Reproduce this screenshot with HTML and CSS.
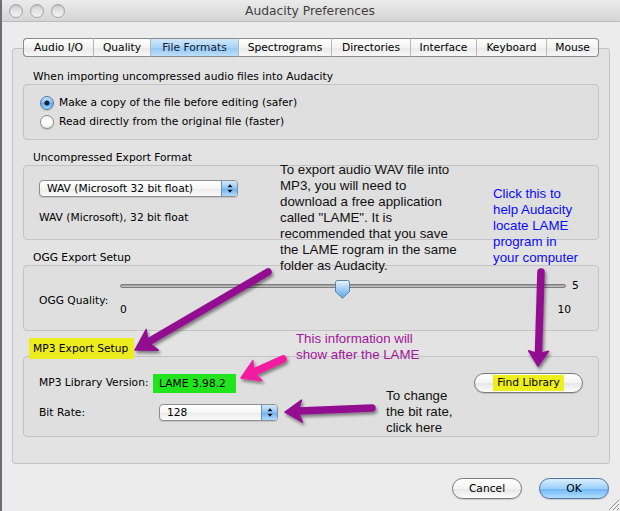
FILE: index.html
```html
<!DOCTYPE html>
<html>
<head>
<meta charset="utf-8">
<title>Audacity Preferences</title>
<link rel="stylesheet" href="styles.css">
</head>
<body>
<div class="window">
  <div class="titlebar">
    <div class="lights"><span class="light"></span><span class="light"></span><span class="light"></span></div>
    <div class="title">Audacity Preferences</div>
    <div class="lights-spacer"></div>
  </div>
  <div class="body">
    <div class="tabs">
      <div class="tab">Audio I/O</div>
      <div class="tab">Quality</div>
      <div class="tab selected">File Formats</div>
      <div class="tab">Spectrograms</div>
      <div class="tab">Directories</div>
      <div class="tab">Interface</div>
      <div class="tab">Keyboard</div>
      <div class="tab">Mouse</div>
    </div>
    <div class="panel">
      <section class="section">
        <div class="heading">When importing uncompressed audio files into Audacity</div>
        <div class="group group-import">
          <div class="radio-row"><span class="radio on"></span><span>Make a copy of the file before editing (safer)</span></div>
          <div class="radio-row"><span class="radio"></span><span>Read directly from the original file (faster)</span></div>
        </div>
      </section>
      <section class="section">
        <div class="heading">Uncompressed Export Format</div>
        <div class="group group-format">
          <div class="select select-format">
            <span class="select-text">WAV (Microsoft 32 bit float)</span>
            <span class="stepper"><svg width="8" height="11" viewBox="0 0 8 11"><path d="M1.5 4.2 L4 1.2 L6.5 4.2 Z M1.5 6.8 L4 9.8 L6.5 6.8 Z" fill="#111"/></svg></span>
          </div>
          <div class="format-desc">WAV (Microsoft), 32 bit float</div>
        </div>
      </section>
      <section class="section">
        <div class="heading">OGG Export Setup</div>
        <div class="group group-ogg">
          <div class="ogg-label">OGG Quality:</div>
          <div class="ogg-slider">
            <div class="slider-row">
              <div class="track">
                <svg class="thumb" width="15" height="19" viewBox="0 0 15 19"><defs><linearGradient id="tg" x1="0" y1="0" x2="0" y2="1"><stop offset="0" stop-color="#eef6fe"/><stop offset="0.45" stop-color="#a5d0f6"/><stop offset="1" stop-color="#5fa5ea"/></linearGradient></defs><path d="M2.5 .5 H12.5 Q14.5 .5 14.5 2.5 V11.5 L7.5 18.3 L.5 11.5 V2.5 Q.5 .5 2.5 .5 Z" fill="url(#tg)" stroke="#5b7ea8"/></svg>
              </div>
              <span class="max">5</span>
            </div>
            <div class="scale"><span>0</span><span>10</span></div>
          </div>
        </div>
      </section>
      <section class="section">
        <div class="heading"><span class="hl-yellow">MP3 Export Setup</span></div>
        <div class="group group-mp3">
          <div class="mp3-row">
            <span class="mp3-label">MP3 Library Version:</span>
            <span class="lame-version">LAME 3.98.2</span>
            <span class="btn btn-find"><span class="hl-yellow-btn">Find Library</span></span>
          </div>
          <div class="mp3-row">
            <span class="mp3-label">Bit Rate:</span>
            <div class="select select-rate">
              <span class="select-text">128</span>
              <span class="stepper"><svg width="8" height="11" viewBox="0 0 8 11"><path d="M1.5 4.2 L4 1.2 L6.5 4.2 Z M1.5 6.8 L4 9.8 L6.5 6.8 Z" fill="#111"/></svg></span>
            </div>
          </div>
        </div>
      </section>
    </div>
    <div class="buttons">
      <span class="btn btn-cancel">Cancel</span>
      <span class="btn btn-ok">OK</span>
    </div>
  </div>

  <div class="note note-lame">To export audio WAV file into<br>MP3, you will need to<br>download a free application<br>called "LAME". It is<br>recommended that you save<br>the LAME rogram in the same<br>folder as Audacity.</div>
  <div class="note note-find">Click this to<br>help Audacity<br>locate LAME<br>program in<br>your computer</div>
  <div class="note note-info">This information will<br>show after the LAME</div>
  <div class="note note-bitrate">To change<br>the bit rate,<br>click here</div>

  <svg class="overlay" width="620" height="511" viewBox="0 0 620 511">
    <defs>
      <filter id="sh" x="-30%" y="-30%" width="160%" height="160%">
        <feDropShadow dx="1.5" dy="2.5" stdDeviation="1.6" flood-color="#000" flood-opacity="0.45"/>
      </filter>
    </defs>
    <g filter="url(#sh)" fill="#930d91" stroke="#930d91" stroke-linecap="round" stroke-linejoin="round">
      <line x1="268" y1="272" x2="150" y2="341" stroke-width="7.5"/>
      <polygon points="135,350 158.3,350.2 148,342.4 146.2,329.5" stroke-width="1.5"/>
    </g>
    <g filter="url(#sh)" fill="#930d91" stroke="#930d91" stroke-linecap="round" stroke-linejoin="round">
      <line x1="541" y1="272" x2="538.5" y2="352" stroke-width="7.5"/>
      <polygon points="538,366 548.5,351.3 538.4,354 528.5,350.7" stroke-width="1.5"/>
    </g>
    <g filter="url(#sh)" fill="#f11c9f" stroke="#f11c9f" stroke-linecap="round" stroke-linejoin="round">
      <line x1="283" y1="359" x2="254" y2="372" stroke-width="7.5"/>
      <polygon points="241,378 261.9,380.6 253.3,372.4 252.9,360.6" stroke-width="1.5"/>
    </g>
    <g filter="url(#sh)" fill="#930d91" stroke="#930d91" stroke-linecap="round" stroke-linejoin="round">
      <line x1="372" y1="408" x2="299" y2="411" stroke-width="7.5"/>
      <polygon points="285,412 302.5,422.2 297.7,411.4 301.5,400.2" stroke-width="1.5"/>
    </g>
  </svg>

  <svg class="grip" width="14" height="14" viewBox="0 0 14 14">
    <path d="M13 3 L3 13 M13 7 L7 13 M13 11 L11 13" stroke="#8a8a8a" stroke-width="1"/>
    <path d="M13.8 3.8 L3.8 13.8 M13.8 7.8 L7.8 13.8" stroke="#fff" stroke-width="1"/>
  </svg>
</div>
</body>
</html>
```

FILE: styles.css
```css
* { box-sizing: border-box; }
html, body { margin: 0; padding: 0; }
body {
  width: 620px;
  height: 511px;
  overflow: hidden;
  background: #ececec;
  font-family: "DejaVu Sans", "Lucida Grande", sans-serif;
  font-size: 10.7px;
  color: #000;
}
.window {
  position: relative;
  width: 620px;
  height: 511px;
  background: #ececec;
  overflow: hidden;
}
.window::after {
  content: "";
  position: absolute;
  left: 0;
  top: 0;
  bottom: 0;
  width: 2px;
  background: #6e6b7d;
}

/* title bar */
.titlebar {
  height: 22px;
  display: flex;
  align-items: center;
  background: linear-gradient(#ebebeb, #d5d5d5);
  border-bottom: 1px solid #bcbcbc;
}
.lights {
  width: 70px;
  display: flex;
  gap: 7px;
  padding-left: 9px;
}
.lights-spacer { width: 70px; }
.light {
  width: 14px;
  height: 14px;
  border-radius: 50%;
  border: 1px solid #a5a5a5;
  background: linear-gradient(#d2d2d2, #f4f4f4);
  box-shadow: inset 0 1px 1px rgba(0,0,0,0.12);
}
.title {
  flex: 1;
  text-align: center;
  font-size: 12.3px;
  color: #3f3f3f;
}

/* body */
.body {
  padding: 16px 10px 0 12px;
}
.tabs {
  position: relative;
  z-index: 1;
  display: flex;
  justify-content: center;
  height: 19px;
  margin-bottom: -9px;
}
.tab {
  height: 19px;
  display: flex;
  align-items: center;
  justify-content: center;
  border-top: 1px solid #8a8a8a;
  border-bottom: 1px solid #8a8a8a;
  border-right: 1px solid #b8b8b8;
  background: linear-gradient(#ffffff, #f3f3f3 50%, #e9e9e9 51%, #f7f7f7);
  white-space: nowrap;
}
.tab:first-child {
  border-left: 1px solid #8a8a8a;
  border-radius: 4px 0 0 4px;
}
.tab:last-child {
  border-right: 1px solid #8a8a8a;
  border-radius: 0 4px 4px 0;
}
.tab:nth-child(1) { width: 71px; }
.tab:nth-child(2) { width: 57px; }
.tab:nth-child(3) { width: 88px; }
.tab:nth-child(4) { width: 93px; }
.tab:nth-child(5) { width: 79px; }
.tab:nth-child(6) { width: 66px; }
.tab:nth-child(7) { width: 70px; }
.tab:nth-child(8) { width: 52px; }
.tab.selected {
  background: linear-gradient(#d2e9fd, #a9d3f7 50%, #94c7f4 51%, #bddffb);
  color: #0d1a33;
}

.panel {
  background: #e3e3e3;
  border: 1px solid #c3c3c3;
  border-radius: 3px;
  padding: 21px 10px 26px 10px;
}
.section + .section { margin-top: 11px; }
.heading {
  line-height: 14px;
  padding-left: 10px;
  white-space: nowrap;
}
.group {
  border: 1px solid #c4c4c4;
  border-radius: 4px;
  background: #dfdfdf;
}

/* import group */
.group-import {
  padding: 8px 15px 8px 16px;
}
.radio-row {
  display: flex;
  align-items: center;
  gap: 5px;
  height: 19px;
}
.radio {
  width: 14px;
  height: 14px;
  flex: none;
  border-radius: 50%;
  border: 1px solid #8b8b8b;
  background: linear-gradient(#f4f4f4, #ffffff 60%, #eaeaea);
  box-shadow: 0 1px 1px rgba(0,0,0,0.15);
}
.radio.on {
  border-color: #52769f;
  background:
    radial-gradient(circle at 50% 50%, #1d2333 0, #1d2333 2.2px, transparent 2.8px),
    linear-gradient(#c4e1fc, #7ab9f4 50%, #5aa5ee 51%, #a6d5fb);
}

/* selects */
.select {
  display: flex;
  align-items: stretch;
  height: 17px;
  border: 1px solid #8d8d8d;
  border-radius: 4px;
  background: linear-gradient(#ffffff, #f6f6f6 50%, #ebebeb 51%, #fafafa);
  overflow: hidden;
  box-shadow: 0 1px 1px rgba(0,0,0,0.12);
}
.select-text {
  flex: 1;
  padding-left: 7px;
  line-height: 15px;
  white-space: nowrap;
}
.stepper {
  width: 16px;
  flex: none;
  display: flex;
  align-items: center;
  justify-content: center;
  border-left: 1px solid #6a8db6;
  background: linear-gradient(#d3e9fd, #8cc3f6 50%, #6aaef1 51%, #b3dcfc);
}

.group-format {
  padding: 14px 15px 14px 15px;
}
.select-format { width: 199px; }
.format-desc {
  margin-top: 14px;
  line-height: 14px;
}

/* ogg group */
.group-ogg {
  display: flex;
  padding: 14px 15px 13px 15px;
}
.ogg-label {
  width: 81px;
  align-self: center;
  line-height: 14px;
  padding-top: 4px;
}
.ogg-slider {
  display: flex;
  flex-direction: column;
  gap: 5px;
}
.slider-row {
  display: flex;
  align-items: flex-start;
  gap: 6px;
  height: 18px;
}
.track {
  position: relative;
  width: 446px;
  height: 4px;
  margin-top: 4px;
  border-radius: 2px;
  border: 1px solid #7d7d7d;
  background: linear-gradient(#9a9a9a, #c9c9c9);
}
.thumb {
  position: absolute;
  left: 214px;
  top: -5px;
}
.max {
  line-height: 12px;
}
.scale {
  display: flex;
  justify-content: space-between;
  width: 451px;
  line-height: 14px;
}

/* mp3 group */
.group-mp3 {
  padding: 16px 15px 15px 15px;
  display: flex;
  flex-direction: column;
  gap: 11px;
}
.mp3-row {
  display: flex;
  align-items: center;
}
.mp3-label {
  width: 120px;
  flex: none;
  line-height: 14px;
  white-space: nowrap;
}
.mp3-row:first-child { height: 20px; }
.lame-version {
  display: inline-block;
  margin-left: -6px;
  padding: 2px 7px 2px 6px;
  line-height: 15px;
  background: #20e51d;
  width: 83px;
  white-space: nowrap;
}
.select-rate { width: 119px; }

.btn {
  display: flex;
  align-items: center;
  justify-content: center;
  height: 21px;
  border: 1px solid #7a7a7a;
  border-radius: 11px;
  background: linear-gradient(#ffffff, #f4f4f4 50%, #e6e6e6 51%, #fcfcfc);
  box-shadow: 0 1px 1px rgba(0,0,0,0.15);
  white-space: nowrap;
}
.btn-find {
  width: 109px;
  height: 20px;
  margin-left: auto;
}
.hl-yellow-btn {
  background: #eeee1c;
  padding: 2px 4px;
  line-height: 12px;
}
.hl-yellow {
  background: #ecec1e;
  padding: 4px 6px 4px 4px;
  margin-left: -4px;
}

.buttons {
  display: flex;
  justify-content: flex-end;
  gap: 17px;
  margin-top: 14px;
  padding-right: 1px;
}
.btn-cancel { width: 70px; }
.btn-ok {
  width: 70px;
  border-color: #4c72a6;
  background: linear-gradient(#d9eefe, #9ed0fa 50%, #6cb4f6 51%, #b1defd);
}

/* annotations */
.note {
  position: absolute;
  font-family: "Liberation Sans", Arial, sans-serif;
  font-size: 13.3px;
  line-height: 16px;
  white-space: nowrap;
}
.note-lame { left: 280px; top: 162px; color: #111; }
.note-find { left: 493px; top: 186px; color: #0a0aff; }
.note-info { left: 296px; top: 331px; color: #a1169a; }
.note-bitrate { left: 386px; top: 388px; color: #111; }

.overlay {
  position: absolute;
  left: 0;
  top: 0;
  pointer-events: none;
}
.grip {
  position: absolute;
  right: 0;
  bottom: 0;
}
```
